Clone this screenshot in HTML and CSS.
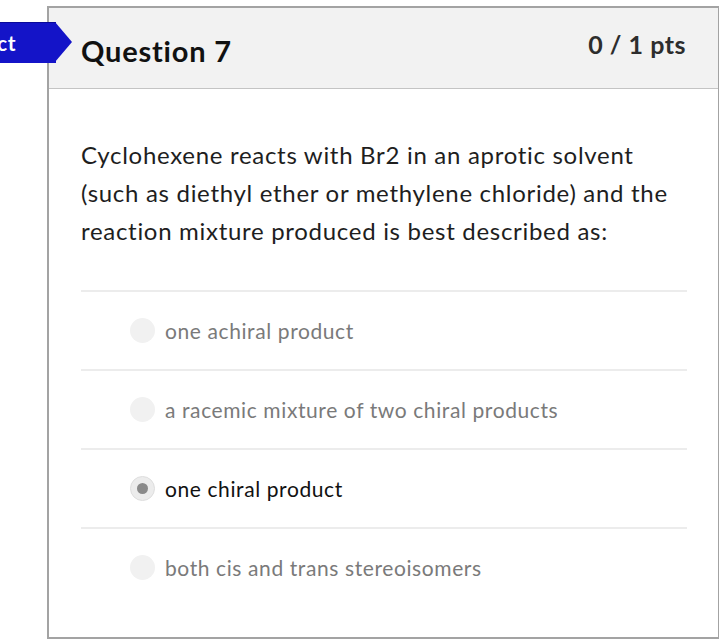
FILE: index.html
```html
<!DOCTYPE html>
<html>
<head>
<meta charset="utf-8">
<link rel="stylesheet" href="styles.css">
</head>
<body>
<div class="page">
  <div class="tag"><span class="tag-text">Incorrect</span></div>
  <div class="card">
    <div class="header">
      <h2 class="title">Question 7</h2>
      <div class="pts">0 / 1 pts</div>
    </div>
    <div class="body">
      <p class="question">Cyclohexene reacts with Br2 in an aprotic solvent (such as diethyl ether or methylene chloride) and the reaction mixture produced is best described as:</p>
      <div class="answers">
        <div class="answer"><span class="radio"></span><span class="label">one achiral product</span></div>
        <div class="answer"><span class="radio"></span><span class="label">a racemic mixture of two chiral products</span></div>
        <div class="answer selected"><span class="radio"></span><span class="label">one chiral product</span></div>
        <div class="answer"><span class="radio"></span><span class="label">both cis and trans stereoisomers</span></div>
      </div>
    </div>
  </div>
</div>
</body>
</html>
```
FILE: styles.css
```css
html, body {
  margin: 0;
  padding: 0;
  background: #ffffff;
  font-family: Lato, "Liberation Sans", sans-serif;
}
.page {
  position: relative;
  padding: 6px 0 0 47px;
  height: 644px;
  box-sizing: border-box;
}
.tag {
  position: absolute;
  left: 0;
  top: 22px;
  width: 56px;
  height: 41px;
  background: #1414c8;
  border-top: 1px solid #0a0a9a;
  box-sizing: border-box;
  overflow: visible;
}
.tag::after {
  content: "";
  position: absolute;
  left: 55px;
  top: -1px;
  width: 0;
  height: 0;
  border-top: 20.5px solid transparent;
  border-bottom: 20.5px solid transparent;
  border-left: 17px solid #1414c8;
}
.tag-text {
  position: absolute;
  right: 40px;
  top: 7px;
  color: #ffffff;
  font-weight: 700;
  font-size: 21px;
  letter-spacing: 0.5px;
  white-space: nowrap;
}
.card {
  width: 672px;
  height: 633px;
  box-sizing: border-box;
  border: 2px solid #a3a3a3;
  border-right-width: 1px;
  display: flex;
  flex-direction: column;
}
.header {
  height: 81px;
  background: #f2f2f2;
  border-bottom: 1px solid #c4c4c4;
  box-sizing: border-box;
  display: flex;
  justify-content: space-between;
  align-items: flex-start;
  padding: 0 32px 0 32px;
}
.title {
  margin: 26px 0 0 0;
  font-size: 29px;
  letter-spacing: 0.8px;
  font-weight: 700;
  color: #111;
  line-height: 34px;
}
.pts {
  margin-top: 21px;
  font-size: 25px;
  letter-spacing: 0.5px;
  font-weight: 700;
  color: #2d2d2d;
  line-height: 30px;
}
.body {
  padding: 47px 31px 0 32px;
}
.question {
  margin: 0;
  font-size: 24px;
  letter-spacing: 0.7px;
  line-height: 38px;
  color: #1e1e1e;
}
.answers {
  margin-top: 40px;
}
.answer {
  height: 79px;
  border-top: 2px solid #ececec;
  box-sizing: border-box;
  display: flex;
  align-items: center;
  padding-left: 49px;
}
.radio {
  width: 25px;
  height: 25px;
  border-radius: 50%;
  background: #f1f1f1;
  box-sizing: border-box;
  margin-right: 10px;
  display: flex;
  align-items: center;
  justify-content: center;
}
.label {
  font-size: 21px;
  letter-spacing: 0.6px;
  color: #7a7a7a;
}
.answer.selected .label {
  color: #111;
}
.answer.selected .radio {
  background: #ececec;
  border: 1px solid #dedede;
}
.answer.selected .radio::after {
  content: "";
  width: 11px;
  height: 11px;
  border-radius: 50%;
  background: #8a8a8a;
}
```
